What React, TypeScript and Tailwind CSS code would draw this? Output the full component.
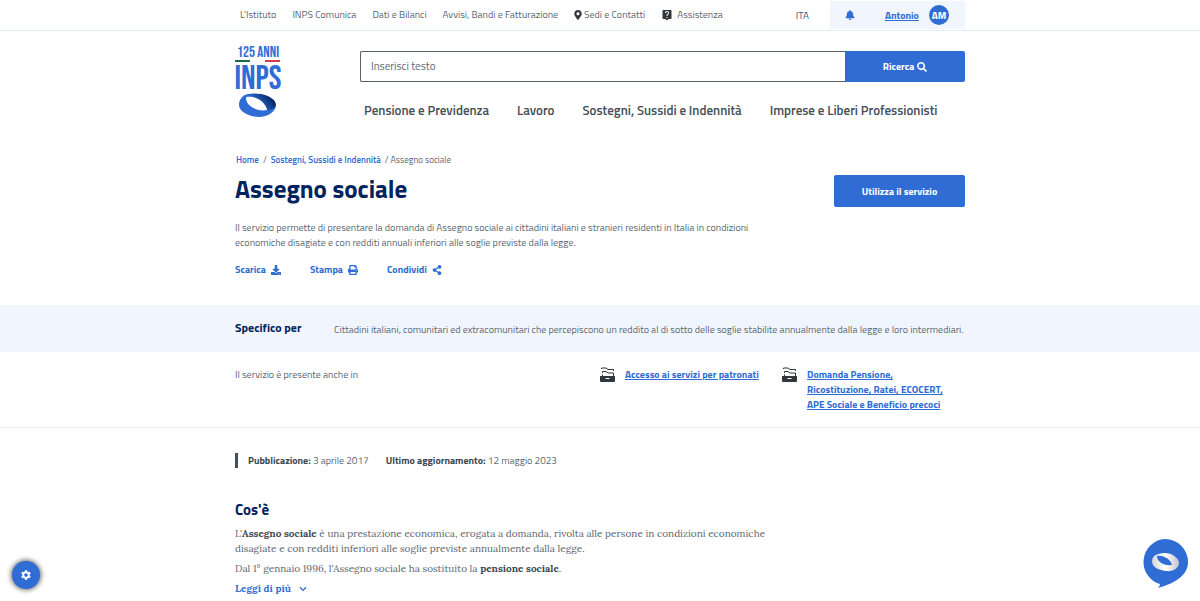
import type { ReactNode } from "react"
import { FaBell, FaChevronDown, FaDownload, FaMapMarkerAlt, FaPrint, FaSearch, FaShareAlt } from "react-icons/fa"
import { MdLiveHelp, MdSettings } from "react-icons/md"

const topLinks: { label: string; icon?: ReactNode }[] = [
  { label: "L'Istituto" },
  { label: "INPS Comunica" },
  { label: "Dati e Bilanci" },
  { label: "Avvisi, Bandi e Fatturazione" },
  { label: "Sedi e Contatti", icon: <FaMapMarkerAlt className="w-2 h-[10px] mr-[2px] text-[#30373d]" /> },
  { label: "Assistenza", icon: <MdLiveHelp className="w-3 h-3 mr-1 text-[#30373d]" /> },
]

const mainLinks = ["Pensione e Previdenza", "Lavoro", "Sostegni, Sussidi e Indennità", "Imprese e Liberi Professionisti"]

const actions = [
  { label: "Scarica", icon: <FaDownload className="w-[10px] h-[10px]" /> },
  { label: "Stampa", icon: <FaPrint className="w-[10px] h-[10px]" /> },
  { label: "Condividi", icon: <FaShareAlt className="w-[10px] h-[10px]" /> },
]

const Container = ({ children, className = "" }: { children: ReactNode; className?: string }) => (
  <div className={`mx-auto w-full max-w-[730px] ${className}`}>{children}</div>
)

const Logo = () => (
  <a href="#" aria-label="INPS 125 anni" className="block w-[46px] shrink-0 text-[#2f6dd5] font-['Bebas_Neue','Antonio','Oswald','Barlow_Condensed','Roboto_Condensed',sans-serif]">
    <svg viewBox="0 0 46 74" className="w-[46px] h-[74px]">
      <defs>
        <linearGradient id="ring" x1="0.2" y1="0.6" x2="0.9" y2="0.3">
          <stop offset="0.2" stopColor="#2f6dd5" />
          <stop offset="1" stopColor="#002460" />
        </linearGradient>
      </defs>
      <text x="23" y="12" textAnchor="middle" fontSize="15" fill="currentColor">125 ANNI</text>
      <rect x="0" y="15" width="15" height="2" fill="#1d6b47" />
      <rect x="30" y="15" width="15" height="2" fill="#d8394a" />
      <text x="23" y="44" textAnchor="middle" fontSize="34" fill="currentColor">INPS</text>
      <path fill="#2f6dd5" d="M4 60C4 53 9 50 13 49L11 53C11 61 22 67 32 65C37 64 41 62 41 59C42 66 33 72 24 72C13 72 4 66 4 60Z" />
      <path fill="url(#ring)" d="M8 51C13 48 20 48 26 49C35 51 41 55 41 60C40 63 37 65 32 65C31 58 21 50 11 52Z" />
    </svg>
  </a>
)

const FolderIcon = () => (
  <svg viewBox="0 0 16 16" className="w-4 h-4 shrink-0 text-[#30373d]" fill="none">
    <path d="M1.500 2V1H6L8 2.500H13.500V4M2.500 6V4.500H6L8 6H13.500V9M2.500 9V7.500" stroke="currentColor" strokeWidth="1" />
    <path fill="currentColor" fillRule="evenodd" d="M0 9H15V14Q15 15 14 15H1Q0 15 0 14ZM5.500 11V12H9.500V11Z" />
  </svg>
)

const TopBar = () => (
  <div className="border-b border-[#e3edf8]">
    <Container className="flex h-[30px] items-center justify-between">
      <nav className="flex gap-4 pb-px pl-[5px] text-[10px] leading-4 text-[#5a6772]">
        {topLinks.map((link) => (
          <a key={link.label} href="#" className="flex items-center whitespace-nowrap">
            {link.icon}
            {link.label}
          </a>
        ))}
      </nav>
      <div className="flex items-center text-[10px]">
        <button type="button" className="mr-[21px] text-[#33518a]">ITA</button>
        <div className="flex h-7 w-[135px] items-center bg-[#f1f5fd] pl-[15px] text-[#2f6dd5]">
          <button type="button" aria-label="Notifiche">
            <FaBell className="w-[10px] h-[10px]" />
          </button>
          <a href="#" className="ml-[30px] font-bold underline">Antonio</a>
          <span className="ml-[10px] flex h-5 w-5 items-center justify-center rounded-full bg-[#2f6dd5] font-bold text-white">AM</span>
        </div>
      </div>
    </Container>
  </div>
)

const Header = () => (
  <header>
    <TopBar />
    <Container className="flex pt-[14px]">
      <Logo />
      <div className="ml-[79px] min-w-0 grow pt-[6px]">
        <form className="flex h-[31px]" onSubmit={(e) => e.preventDefault()}>
          <input
            type="text"
            aria-label="Inserisci testo"
            placeholder="Inserisci testo"
            className="min-w-0 grow rounded-l-[2px] border border-r-0 border-[#5c6166] px-[10px] text-[11px] placeholder:text-[#5a6772]"
          />
          <button type="submit" className="flex w-[120px] items-center justify-center gap-[3px] rounded-r-[2px] bg-[#2f6dd5] text-[10px] font-bold text-white">
            Ricerca
            <FaSearch className="w-[10px] h-[10px]" />
          </button>
        </form>
        <nav className="mt-[19px] flex gap-7 pl-1 text-[13px] leading-[18px] font-semibold text-[#455058]">
          {mainLinks.map((label) => (
            <a key={label} href="#" className="whitespace-nowrap">{label}</a>
          ))}
        </nav>
      </div>
    </Container>
  </header>
)

const Intro = () => (
  <Container className="pt-[35px] pb-[27px]">
    <nav aria-label="Percorso" className="flex gap-1 pl-px text-[9px] leading-3 text-[#5a6772]">
      <a href="#" className="font-semibold text-[#2f6dd5]">Home</a>
      <span>/</span>
      <a href="#" className="font-semibold text-[#2f6dd5]">Sostegni, Sussidi e Indennità</a>
      <span>/ Assegno sociale</span>
    </nav>
    <div className="mt-[9px] flex items-start justify-between">
      <h1 className="text-[25px] leading-7 font-bold text-[#00245d]">Assegno sociale</h1>
      <button type="button" className="h-8 w-[131px] rounded-[2px] bg-[#2f6dd5] text-[10px] font-bold text-white">
        Utilizza il servizio
      </button>
    </div>
    <p className="mt-[13px] max-w-[540px] text-[10px] leading-[15px] text-[#5a6772]">
      Il servizio permette di presentare la domanda di Assegno sociale ai cittadini italiani e stranieri residenti in Italia in condizioni economiche disagiate e con redditi annuali inferiori alle soglie previste dalla legge.
    </p>
    <div className="mt-3 flex gap-[29px] text-[10px] leading-4 font-bold text-[#2f6dd5]">
      {actions.map((action) => (
        <button key={action.label} type="button" className="flex items-center gap-[5px]">
          {action.label}
          {action.icon}
        </button>
      ))}
    </div>
  </Container>
)

const Services = () => (
  <section className="border-b border-[#e3ecfa]">
    <Container className="flex py-[15px] text-[10px] leading-[15px]">
      <p className="w-[365px] text-[#5a6772]">Il servizio è presente anche in</p>
      <div className="flex w-[182px] gap-[9px]">
        <FolderIcon />
        <a href="#" className="font-bold whitespace-nowrap text-[#2f6dd5] underline">Accesso ai servizi per patronati</a>
      </div>
      <div className="flex grow gap-[9px]">
        <FolderIcon />
        <a href="#" className="w-[150px] font-bold text-[#2f6dd5] underline">
          Domanda Pensione,<br />
          Ricostituzione, Ratei, ECOCERT,<br />
          APE Sociale e Beneficio precoci
        </a>
      </div>
    </Container>
  </section>
)

const Details = () => (
  <Container className="pt-[25px] pb-1">
    <div className="flex gap-[17px] border-l-[3px] border-[#455058] pl-[10px] text-[10px] leading-[15px] text-[#5a6772]">
      <span><b className="text-[#3d474f]">Pubblicazione:</b> 3 aprile 2017</span>
      <span><b className="text-[#3d474f]">Ultimo aggiornamento:</b> 12 maggio 2023</span>
    </div>
    <h2 className="mt-8 text-[15px] leading-5 font-bold text-[#00245d]">Cos'è</h2>
    <div className="mt-[6px] max-w-[545px] font-['Lora','Liberation_Serif',serif] text-[10px] leading-[15px] text-[#5a6772]">
      <p>
        L'<b className="text-[#3d474f]">Assegno sociale</b> è una prestazione economica, erogata a domanda, rivolta alle persone in condizioni economiche disagiate e con redditi inferiori alle soglie previste annualmente dalla legge.
      </p>
      <p className="mt-[5px]">
        Dal 1° gennaio 1996, l'Assegno sociale ha sostituito la <b className="text-[#3d474f]">pensione sociale</b>.
      </p>
      <button type="button" className="mt-[5px] flex items-center gap-2 font-bold text-[#2f6dd5]">
        Leggi di più
        <FaChevronDown className="w-2 h-2" />
      </button>
    </div>
  </Container>
)

const ChatButton = () => (
  <button type="button" aria-label="Assistente virtuale" className="fixed right-3 bottom-3">
    <svg viewBox="0 0 46 50" className="w-[46px] h-[50px]">
      <defs>
        <linearGradient id="chatRing" x1="0" y1="0" x2="1" y2="0">
          <stop offset="0" stopColor="#d3d5da" />
          <stop offset="0.5" stopColor="#ffffff" />
          <stop offset="1" stopColor="#c3c6cd" />
        </linearGradient>
      </defs>
      <path fill="#2f6dd5" d="M23 0A23 23 0 0 1 46 23C46 36 34 44 16 49Q18 47 18 45A23 23 0 0 1 23 0Z" />
      <path
        fill="url(#chatRing)"
        fillRule="evenodd"
        d="M10 22C10 16 17 14 23 14C30 14 37 19 37 24C37 29 31 33 24 32C16 31 10 28 10 22ZM15 17C15 23 22 27 30 26C29 21 22 16 15 17Z"
      />
    </svg>
  </button>
)

const App = () => {
  return (
    <div className="font-['Titillium_Web','Roboto',sans-serif]">
      <Header />
      <main>
        <Intro />
        <section className="bg-[#f1f5fd]">
          <Container className="flex pt-[15px] pb-[14px] leading-4">
            <h2 className="w-[99px] shrink-0 text-[12px] font-bold text-[#00245d]">Specifico per</h2>
            <p className="pt-[2px] text-[10px] text-[#5a6772]">
              Cittadini italiani, comunitari ed extracomunitari che percepiscono un reddito al di sotto delle soglie stabilite annualmente dalla legge e loro intermediari.
            </p>
          </Container>
        </section>
        <Services />
        <Details />
      </main>
      <button
        type="button"
        aria-label="Impostazioni"
        className="fixed bottom-3 left-3 flex h-7 w-7 items-center justify-center rounded-full bg-[#2f6dd5] text-white shadow-[0_0_5px_1px_rgba(0,0,0,0.6)]"
      >
        <MdSettings className="w-3 h-3" />
      </button>
      <ChatButton />
    </div>
  )
}

export default App
